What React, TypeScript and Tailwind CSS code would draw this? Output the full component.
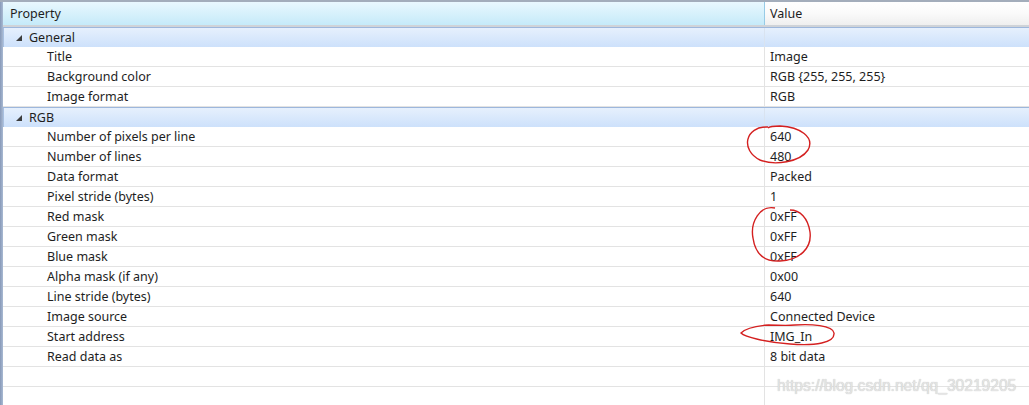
import React from "react";

type Row = { k: string; v?: string; cat?: boolean };

const rows: Row[] = [
  { k: "General", cat: true },
  { k: "Title", v: "Image" },
  { k: "Background color", v: "RGB {255, 255, 255}" },
  { k: "Image format", v: "RGB" },
  { k: "RGB", cat: true },
  { k: "Number of pixels per line", v: "640" },
  { k: "Number of lines", v: "480" },
  { k: "Data format", v: "Packed" },
  { k: "Pixel stride (bytes)", v: "1" },
  { k: "Red mask", v: "0xFF" },
  { k: "Green mask", v: "0xFF" },
  { k: "Blue mask", v: "0xFF" },
  { k: "Alpha mask (if any)", v: "0x00" },
  { k: "Line stride (bytes)", v: "640" },
  { k: "Image source", v: "Connected Device" },
  { k: "Start address", v: "IMG_In" },
  { k: "Read data as", v: "8 bit data" },
  { k: "", v: "" },
];

function Tri() {
  return (
    <svg width="6" height="6" viewBox="0 0 6 6" className="shrink-0">
      <polygon points="6,0 6,6 0,6" fill="#3c3c3c" />
    </svg>
  );
}

export default function App() {
  return (
    <div
      className="relative w-[1029px] h-[405px] overflow-hidden bg-white text-[12.5px] text-[#1e1e1e]"
      style={{ fontFamily: '"Noto Sans", "DejaVu Sans", sans-serif' }}
    >
      <div className="h-[2px] bg-[#a3adbb]" />
      <div className="flex h-[403px]">
        <div className="w-[3px] bg-gradient-to-r from-[#8799b8] to-[#a9bad3]" />
        <div className="flex-1 flex flex-col">
          {/* header */}
          <div className="grid grid-cols-[762px_1fr] h-[25px] border-b-2 border-[#cfd3d8]">
            <div className="flex items-center pl-[7px] pt-[2px] bg-gradient-to-b from-[#e9f8fe] to-[#c5eaf9] border-r border-[#97cbe6]">
              Property
            </div>
            <div className="flex items-center pl-[5px] pt-[2px] bg-gradient-to-b from-[#ffffff] via-[#fafafa] to-[#efefef]">
              Value
            </div>
          </div>
          {rows.map((r, i) =>
            r.cat ? (
              <div
                key={i}
                className="grid grid-cols-[762px_1fr] h-[20px] border-t border-[#9db7dc] bg-gradient-to-b from-[#e6f0fd] to-[#cde1fb]"
              >
                <div className="flex items-center gap-[7px] pl-[12px] pt-px border-l border-[#a9c0e0] border-r border-r-[#d9e3f0]">
                  <Tri />
                  <span className="leading-none">{r.k}</span>
                </div>
                <div />
              </div>
            ) : (
              <div key={i} className="grid grid-cols-[762px_1fr] h-[20px] border-b border-[#e3e3e3]">
                <div className="flex items-center pl-[44px] pt-px border-r border-[#e3e3e3]">{r.k}</div>
                <div className="flex items-center pl-[5px] pt-px">{r.v}</div>
              </div>
            )
          )}
          <div className="grid grid-cols-[762px_1fr] flex-1">
            <div className="border-r border-[#e3e3e3]" />
            <div />
          </div>
        </div>
      </div>

      {/* annotations */}
      <svg className="absolute left-0 top-0 pointer-events-none" width="1029" height="405">
        <path
          d="M768 127 C 745 126, 740 150, 760 160 C 775 166, 800 162, 808 150 C 815 137, 800 127, 780 126 C 775 126, 770 126, 768 128"
          fill="none"
          stroke="#d42020"
          strokeWidth="1.4"
        />
        <path
          d="M775 208 C 760 205, 750 222, 753 238 C 755 252, 762 262, 780 261 C 800 260, 812 248, 810 232 C 808 218, 800 210, 790 210"
          fill="none"
          stroke="#d42020"
          strokeWidth="1.4"
        />
        <path
          d="M768 325 C 755 326, 745 329, 741 333 C 745 337, 765 342, 790 344 C 815 346, 835 343, 834 333 C 833 325, 810 324, 795 325 C 785 326, 778 325, 768 325"
          fill="none"
          stroke="#d42020"
          strokeWidth="1.4"
        />
      </svg>
      <div
        className="absolute left-[777px] top-[378px] text-[15.6px] text-[#e4e4e4] leading-none whitespace-nowrap"
        style={{ fontFamily: '"Liberation Sans", Arial, sans-serif', textShadow: "0 0 1px #b8b8b8" }}
      >
        https://blog.csdn.net/qq_30219205
      </div>
    </div>
  );
}
